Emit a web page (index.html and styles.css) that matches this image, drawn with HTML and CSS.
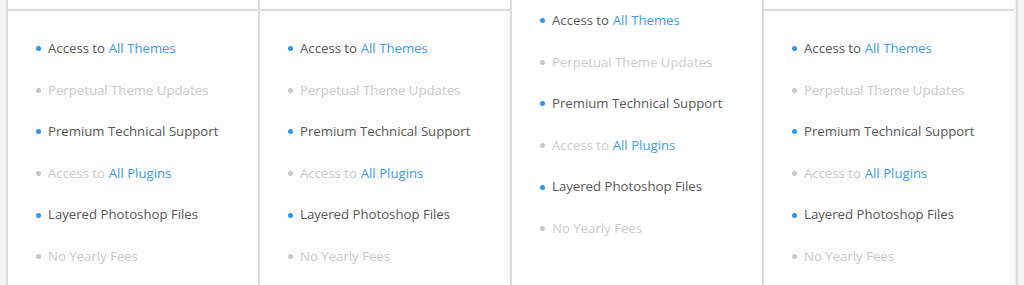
FILE: index.html
```html
<!DOCTYPE html>
<html lang="en">
<head>
<meta charset="utf-8">
<title>Pricing</title>
<link rel="stylesheet" href="styles.css">
</head>
<body>
<div class="pricing">
  <div class="plan">
    <div class="plan-head"></div>
    <ul class="features">
      <li class="on">Access to <a href="#">All Themes</a></li>
      <li class="off">Perpetual Theme Updates</li>
      <li class="on">Premium Technical Support</li>
      <li class="off">Access to <a href="#">All Plugins</a></li>
      <li class="on">Layered Photoshop Files</li>
      <li class="off">No Yearly Fees</li>
    </ul>
  </div>
  <div class="plan">
    <div class="plan-head"></div>
    <ul class="features">
      <li class="on">Access to <a href="#">All Themes</a></li>
      <li class="off">Perpetual Theme Updates</li>
      <li class="on">Premium Technical Support</li>
      <li class="off">Access to <a href="#">All Plugins</a></li>
      <li class="on">Layered Photoshop Files</li>
      <li class="off">No Yearly Fees</li>
    </ul>
  </div>
  <div class="plan featured">
    <ul class="features">
      <li class="on">Access to <a href="#">All Themes</a></li>
      <li class="off">Perpetual Theme Updates</li>
      <li class="on">Premium Technical Support</li>
      <li class="off">Access to <a href="#">All Plugins</a></li>
      <li class="on">Layered Photoshop Files</li>
      <li class="off">No Yearly Fees</li>
    </ul>
  </div>
  <div class="plan">
    <div class="plan-head"></div>
    <ul class="features">
      <li class="on">Access to <a href="#">All Themes</a></li>
      <li class="off">Perpetual Theme Updates</li>
      <li class="on">Premium Technical Support</li>
      <li class="off">Access to <a href="#">All Plugins</a></li>
      <li class="on">Layered Photoshop Files</li>
      <li class="off">No Yearly Fees</li>
    </ul>
  </div>
</div>
</body>
</html>
```
FILE: styles.css
```css
html, body {
  margin: 0;
  padding: 0;
  background: #f4f4f4;
  font-family: "Open Sans", "Noto Sans", sans-serif;
  font-size: 13.2px;
  overflow: hidden;
}

.pricing {
  display: flex;
  margin-left: 6px;
  width: 1010px;
  border-right: 2px solid #dcdcdc;
  height: 285px;
}

.plan {
  flex: 0 0 250px;
  border-left: 2px solid #dcdcdc;
  background: #fcfcfc;
}

.plan.featured {
  background: #fff;
  box-shadow: 0 0 4px rgba(0, 0, 0, 0.06);
  position: relative;
  z-index: 1;
}

.plan-head {
  height: 9px;
  border-bottom: 2px solid #dcdcdc;
  background: #fdfdfd;
}

.features {
  list-style: none;
  margin: 0;
  padding: 17px 0 0 28px;
}

.featured .features {
  padding-top: 0;
  margin-top: 0;
}

.features li {
  height: 41.6px;
  line-height: 41.6px;
  display: flex;
  align-items: center;
  white-space: nowrap;
}

.features li::before {
  content: "";
  width: 5px;
  height: 5px;
  border-radius: 50%;
  margin-right: 7px;
  flex: 0 0 5px;
}

.features li.on {
  color: #585858;
}

.features li.on::before {
  background: #2f96ea;
}

.features li.off {
  color: #cbcbcb;
}

.features li.off::before {
  background: #c6c6c6;
}

.features li a {
  color: #3f9de8;
  text-decoration: none;
  margin-left: 0.28em;
}
```
